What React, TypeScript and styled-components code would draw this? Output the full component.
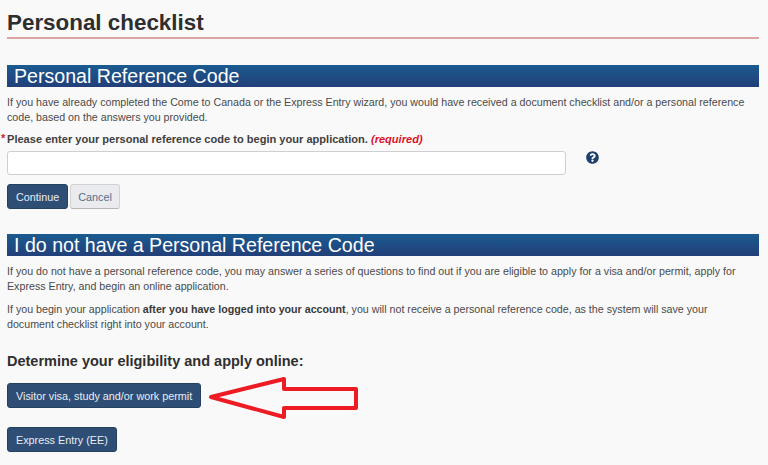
import styled, { createGlobalStyle } from "styled-components";
import { FaQuestionCircle } from "react-icons/fa";

const GlobalStyle = createGlobalStyle`
  html, body {
    margin: 0;
    padding: 0;
    background: #f9f9f9;
    overflow: hidden;
  }
`;

export default function App() {
  return (
    <Page>
      <GlobalStyle />
      <Title>Personal checklist</Title>

      <SectionBar $first>Personal Reference Code</SectionBar>
      <Paragraph>
        If you have already completed the Come to Canada or the Express Entry wizard, you would have
        received a document checklist and/or a personal reference code, based on the answers you
        provided.
      </Paragraph>

      <FieldLabel>
        <Asterisk>*</Asterisk>
        Please enter your personal reference code to begin your application.{" "}
        <Required>(required)</Required>
      </FieldLabel>
      <FieldRow>
        <CodeInput type="text" />
        <HelpIcon />
      </FieldRow>

      <ButtonRow>
        <PrimaryButton>Continue</PrimaryButton>
        <SecondaryButton>Cancel</SecondaryButton>
      </ButtonRow>

      <SectionBar>I do not have a Personal Reference Code</SectionBar>
      <Paragraph>
        If you do not have a personal reference code, you may answer a series of questions to find
        out if you are eligible to apply for a visa and/or permit, apply for Express Entry, and
        begin an online application.
      </Paragraph>
      <Paragraph $spaced>
        If you begin your application <strong>after you have logged into your account</strong>, you
        will not receive a personal reference code, as the system will save your document checklist
        right into your account.
      </Paragraph>

      <Subtitle>Determine your eligibility and apply online:</Subtitle>
      <ApplyList>
        <PrimaryButton>Visitor visa, study and/or work permit</PrimaryButton>
        <PrimaryButton>Express Entry (EE)</PrimaryButton>
        <Arrow viewBox="0 0 156 44" fill="none">
          <path
            d="M5 21 L78 3 L78 13 L150 13 L150 32 L78 32 L78 41 Z"
            stroke="#ed1c24"
            strokeWidth="4"
            strokeLinejoin="round"
          />
        </Arrow>
      </ApplyList>
    </Page>
  );
}

const Page = styled.div`
  box-sizing: border-box;
  width: 768px;
  height: 465px;
  padding: 0 9px 0 7px;
  overflow: hidden;
  font-family: "Liberation Sans", Arial, sans-serif;
  color: #3b3b3b;
`;

const Title = styled.h1`
  margin: 0;
  padding-top: 9px;
  height: 28px;
  line-height: 28px;
  font-size: 22.4px;
  font-weight: 700;
  color: #2e2e2e;
  border-bottom: 2px solid #dda3a3;
`;

const SectionBar = styled.h2<{ $first?: boolean }>`
  margin: ${({ $first }) => ($first ? "26px" : "25px")} 0 0;
  height: 22px;
  padding-left: 7px;
  line-height: 23px;
  font-size: 19.6px;
  font-weight: 400;
  color: #fff;
  white-space: nowrap;
  background: linear-gradient(#1a5b90, #223f78);
`;

const Paragraph = styled.p<{ $spaced?: boolean }>`
  margin: ${({ $spaced }) => ($spaced ? "8px" : "7.5px")} 0 0;
  width: 746px;
  font-size: 10.68px;
  line-height: 15px;
  color: #4a4a4a;

  strong {
    color: #3a3a3a;
  }
`;

const FieldLabel = styled.div`
  position: relative;
  margin-top: 7px;
  font-size: 11.07px;
  line-height: 15px;
  font-weight: 700;
  color: #3f3f3f;
`;

const Asterisk = styled.span`
  position: absolute;
  left: -6px;
  top: -1px;
  color: #d2232a;
`;

const Required = styled.em`
  color: #e0112b;
`;

const FieldRow = styled.div`
  display: flex;
  align-items: flex-start;
  gap: 20px;
  margin-top: 4.5px;
`;

const CodeInput = styled.input`
  box-sizing: border-box;
  width: 559px;
  height: 24px;
  margin: 0;
  background: #fff;
  border: 1px solid #cfcfcf;
  border-radius: 3px;
  outline: none;
`;

const HelpIcon = styled(FaQuestionCircle)`
  width: 13px;
  height: 13px;
  color: #1d3f6b;
`;

const ButtonRow = styled.div`
  display: flex;
  gap: 2px;
  margin-top: 9px;
`;

const PrimaryButton = styled.button`
  box-sizing: border-box;
  height: 25px;
  padding: 0 8px;
  font-family: inherit;
  font-size: 10.8px;
  color: #e8edf3;
  background: #2f4e75;
  border: 1px solid #26415f;
  border-radius: 3px;
  white-space: nowrap;
`;

const SecondaryButton = styled(PrimaryButton)`
  padding: 0 7px;
  color: #55708f;
  background: #e9ebee;
  border-color: #d2d2d2;
  border-bottom-color: #b5b5b5;
`;

const Subtitle = styled.h3`
  margin: 20.5px 0 0;
  font-size: 14.5px;
  line-height: 18px;
  font-weight: 700;
  color: #2f2f2f;
`;

const ApplyList = styled.div`
  position: relative;
  display: flex;
  flex-direction: column;
  align-items: flex-start;
  gap: 19px;
  margin-top: 13px;
`;

const Arrow = styled.svg`
  position: absolute;
  left: 199px;
  top: -7px;
  width: 156px;
  height: 44px;
`;
